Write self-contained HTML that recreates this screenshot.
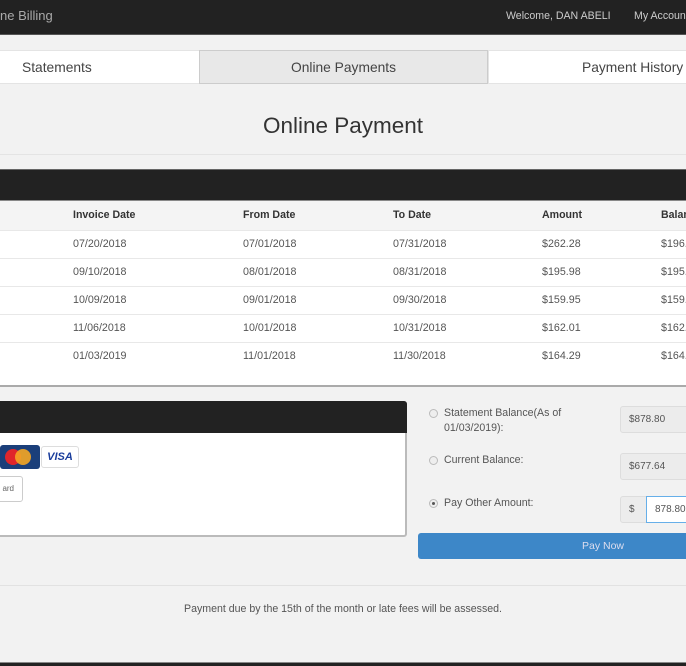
<!DOCTYPE html>
<html><head><meta charset="utf-8"><style>
*{margin:0;padding:0;box-sizing:border-box}
body{width:686px;height:666px;background:#f2f2f2;font-family:"Liberation Sans",sans-serif;position:relative;overflow:hidden;color:#333}
.a{position:absolute}
.top{left:0;top:0;width:686px;height:35px;background:#222;border-bottom:1px solid #555}
.tab{top:50px;height:34px;background:#fff;font-size:13.8px;color:#444;line-height:33px;text-align:center;border:1px solid #e4e4e4}
.th{font-size:10.6px;font-weight:bold;color:#333}
.td{font-size:10.7px;color:#555}
.row{left:0;width:686px;height:28px;border-top:1px solid #e8e8e8}
.inp{background:#ececec;border:1px solid #ddd;border-radius:3px;font-size:10px;color:#555;line-height:26px;padding-left:8px}
.rad{width:9px;height:9px;border-radius:50%;border:1px solid #bbb;background:#eee}
.lab{font-size:10.6px;color:#555;line-height:15px}
</style></head><body>
<div class="a top"></div>
<div class="a" style="left:0;top:8px;font-size:13px;color:#aaa">ne Billing</div>
<div class="a" style="left:506px;top:10px;font-size:10.6px;color:#ccc;white-space:nowrap">Welcome, DAN ABELI</div>
<div class="a" style="left:634px;top:10px;font-size:10.6px;color:#ccc;white-space:nowrap">My Account</div>

<div class="a tab" style="left:-10px;width:210px;text-align:left;padding-left:31px">Statements</div>
<div class="a tab" style="left:199px;width:289px;background:#e8e8e8;border-color:#ccc">Online Payments</div>
<div class="a tab" style="left:488px;width:210px;text-align:left;padding-left:93px;white-space:nowrap">Payment History</div>

<div class="a" style="left:0;top:113px;width:686px;text-align:center;font-size:22.5px;color:#333">Online Payment</div>
<div class="a" style="left:0;top:154px;width:686px;height:1px;background:#e4e4e4"></div>

<div class="a" style="left:0;top:169px;width:686px;height:218px;background:#fff;border-bottom:2px solid #aaa"></div>
<div class="a" style="left:0;top:169px;width:686px;height:32px;background:#222;border-top:1px solid #666;border-bottom:1px solid #888"></div>
<div class="a" style="left:0;top:201px;width:686px;height:29px;background:#f4f4f4"></div>
<div class="a th" style="left:73px;top:209px">Invoice Date</div>
<div class="a th" style="left:243px;top:209px">From Date</div>
<div class="a th" style="left:393px;top:209px">To Date</div>
<div class="a th" style="left:542px;top:209px">Amount</div>
<div class="a th" style="left:661px;top:209px">Balance</div>

<div class="a row" style="top:230px"></div>
<div class="a row" style="top:258px"></div>
<div class="a row" style="top:286px"></div>
<div class="a row" style="top:314px"></div>
<div class="a row" style="top:342px"></div>

<div class="a td" style="left:73px;top:238px">07/20/2018</div><div class="a td" style="left:243px;top:238px">07/01/2018</div><div class="a td" style="left:393px;top:238px">07/31/2018</div><div class="a td" style="left:542px;top:238px">$262.28</div><div class="a td" style="left:661px;top:238px">$196.95</div>
<div class="a td" style="left:73px;top:266px">09/10/2018</div><div class="a td" style="left:243px;top:266px">08/01/2018</div><div class="a td" style="left:393px;top:266px">08/31/2018</div><div class="a td" style="left:542px;top:266px">$195.98</div><div class="a td" style="left:661px;top:266px">$195.98</div>
<div class="a td" style="left:73px;top:294px">10/09/2018</div><div class="a td" style="left:243px;top:294px">09/01/2018</div><div class="a td" style="left:393px;top:294px">09/30/2018</div><div class="a td" style="left:542px;top:294px">$159.95</div><div class="a td" style="left:661px;top:294px">$159.95</div>
<div class="a td" style="left:73px;top:322px">11/06/2018</div><div class="a td" style="left:243px;top:322px">10/01/2018</div><div class="a td" style="left:393px;top:322px">10/31/2018</div><div class="a td" style="left:542px;top:322px">$162.01</div><div class="a td" style="left:661px;top:322px">$162.01</div>
<div class="a td" style="left:73px;top:350px">01/03/2019</div><div class="a td" style="left:243px;top:350px">11/01/2018</div><div class="a td" style="left:393px;top:350px">11/30/2018</div><div class="a td" style="left:542px;top:350px">$164.29</div><div class="a td" style="left:661px;top:350px">$164.29</div>

<div class="a" style="left:-4px;top:401px;width:411px;height:136px;background:#fff;border:2px solid #bbb;border-radius:3px"></div>
<div class="a" style="left:-4px;top:401px;width:411px;height:32px;background:#222;border-radius:3px 3px 0 0"></div>
<div class="a" style="left:0;top:445px;width:40px;height:24px;background:#1b3f7a;border-radius:3px"></div>
<div class="a" style="left:5px;top:449px;width:16px;height:16px;border-radius:50%;background:#e0262b"></div>
<div class="a" style="left:15px;top:449px;width:16px;height:16px;border-radius:50%;background:#f5a623;opacity:.9"></div>
<div class="a" style="left:41px;top:446px;width:38px;height:22px;background:#fff;border:1px solid #ddd;border-radius:3px;font-size:11px;font-weight:bold;font-style:italic;color:#1a3d9c;text-align:center;line-height:20px">VISA</div>
<div class="a" style="left:-10px;top:476px;width:33px;height:26px;background:#fff;border:1px solid #ccc;border-radius:3px;font-size:8px;color:#666;line-height:24px;text-align:right;padding-right:8px">ard</div>

<div class="a rad" style="left:429px;top:409px"></div>
<div class="a lab" style="left:444px;top:406px">Statement Balance(As of<br>01/03/2019):</div>
<div class="a inp" style="left:620px;top:406px;width:80px;height:27px">$878.80</div>
<div class="a rad" style="left:429px;top:456px"></div>
<div class="a lab" style="left:444px;top:453px">Current Balance:</div>
<div class="a inp" style="left:620px;top:453px;width:80px;height:27px">$677.64</div>
<div class="a" style="left:429px;top:499px;width:9px;height:9px;border-radius:50%;border:1px solid #bbb;background:#eee"><div style="margin:2px;width:3px;height:3px;border-radius:50%;background:#555"></div></div>
<div class="a lab" style="left:444px;top:496px">Pay Other Amount:</div>
<div class="a inp" style="left:620px;top:496px;width:30px;height:27px">$</div>
<div class="a" style="left:646px;top:496px;width:60px;height:27px;background:#fff;border:1px solid #66afe9;font-size:10px;color:#555;line-height:25px;padding-left:8px">878.80</div>
<div class="a" style="left:418px;top:533px;width:370px;height:26px;background:#3d87c8;border-radius:3px;color:#dde;font-size:10.5px;text-align:center;line-height:26px">Pay Now</div>

<div class="a" style="left:0;top:585px;width:686px;height:1px;background:#e2e2e2"></div>
<div class="a" style="left:0;top:603px;width:686px;text-align:center;font-size:10.6px;color:#555">Payment due by the 15th of the month or late fees will be assessed.</div>
<div class="a" style="left:0;top:662px;width:686px;height:4px;background:#222;border-top:1px solid #888"></div>
</body></html>
